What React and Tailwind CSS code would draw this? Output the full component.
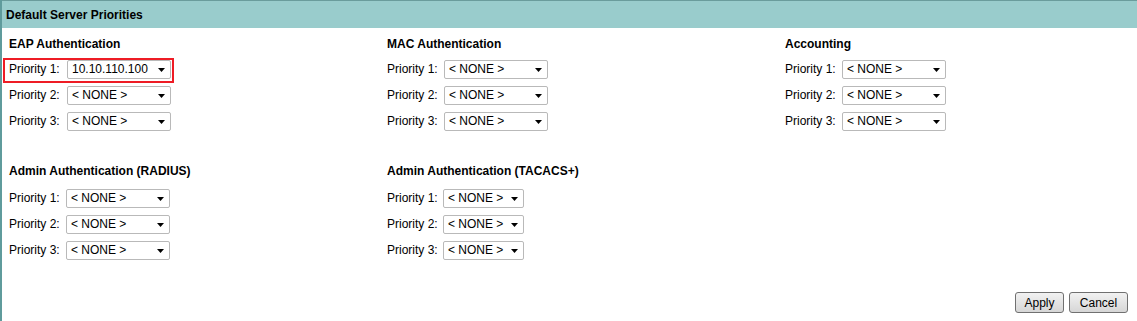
import React from "react";

function Arrow() {
  return (
    <svg width="7" height="4" viewBox="0 0 7 4" className="block">
      <path d="M0 0H7L3.5 4Z" fill="#000" />
    </svg>
  );
}

function Sel({ value = "< NONE >", w = "w-[104px]" }) {
  return (
    <div
      className={`${w} h-[19px] border border-[#b9b9b9] rounded-[2px] bg-white flex items-center justify-between pl-[4px] pr-[5px] text-[12px] leading-[16px] text-black`}
    >
      <span>{value}</span>
      <span className="mt-[2px]">
        <Arrow />
      </span>
    </div>
  );
}

function Row({ n, value, w, labelW = "w-[58px]" }) {
  return (
    <div className="h-[26px] flex items-center">
      <div className={`${labelW} text-[12px] leading-[16px] text-black`}>
        Priority {n}:
      </div>
      <Sel value={value} w={w} />
    </div>
  );
}

function Section({ title, first, w, labelW, gap = "mb-[4px]" }) {
  return (
    <div>
      <div className={`h-[16px] text-[12px] leading-[16px] font-bold text-black ${gap}`}>
        {title}
      </div>
      <Row n={1} value={first} w={w} labelW={labelW} />
      <Row n={2} w={w} labelW={labelW} />
      <Row n={3} w={w} labelW={labelW} />
    </div>
  );
}

export default function App() {
  return (
    <div
      className="w-[1137px] h-[321px] bg-white border-l-2 border-[#5f9b9c] flex flex-col overflow-hidden"
      style={{ fontFamily: '"Liberation Sans", Arial, sans-serif' }}
    >
      <div className="h-[28px] shrink-0 bg-[#99cccc] border-t border-[#6a9c9c] pl-[4px] flex items-center text-[12px] font-bold text-black">
        Default Server Priorities
      </div>

      <div className="pl-[7px] pt-[8px] grid grid-cols-[378px_398px_1fr] relative">
        <div className="absolute left-[1px] top-[30px] w-[171px] h-[25px] border-2 border-[#ee1c25] pointer-events-none" />
        <Section title="EAP Authentication" first="10.10.110.100" labelW="w-[58px]" />
        <Section title="MAC Authentication" labelW="w-[57px]" />
        <Section title="Accounting" labelW="w-[57px]" />
      </div>

      <div className="pl-[7px] pt-[29px] grid grid-cols-[378px_398px_1fr]">
        <Section title="Admin Authentication (RADIUS)" labelW="w-[57px]" gap="mb-[6px]" />
        <Section
          title="Admin Authentication (TACACS+)"
          labelW="w-[56px]"
          w="w-[81px]"
          gap="mb-[6px]"
        />
        <div />
      </div>

      <div className="flex justify-end gap-[5px] pr-[9px] pt-[29px]">
        <button className="w-[49px] h-[21px] rounded-[3px] border border-[#707070] bg-gradient-to-b from-[#f2f2f2] to-[#d6d6d6] text-[12px] leading-[16px] text-black">
          Apply
        </button>
        <button className="w-[59px] h-[21px] rounded-[3px] border border-[#707070] bg-gradient-to-b from-[#f2f2f2] to-[#d6d6d6] text-[12px] leading-[16px] text-black">
          Cancel
        </button>
      </div>
    </div>
  );
}
